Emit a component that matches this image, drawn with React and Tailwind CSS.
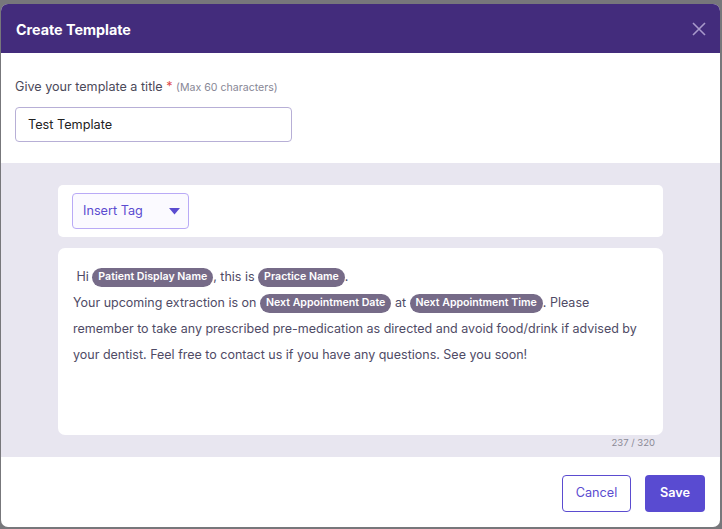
import React from "react";

function Tag({ children }) {
  return (
    <span className="inline-flex h-[19px] items-center rounded-full bg-[#766b88] px-[6px] align-middle text-[10.6px] font-semibold leading-none text-white">
      {children}
    </span>
  );
}

export default function App() {
  return (
    <div className="h-[529px] w-[722px] overflow-hidden bg-[#77777b] pl-[1px] pt-[4px] font-['Inter',sans-serif]">
      <div className="flex h-[523px] w-[719px] flex-col overflow-hidden rounded-[7px] bg-white">
        <div className="flex h-[49px] shrink-0 items-center justify-between bg-[#432c7c] pl-[15px] pr-[14px]">
          <h2 className="pt-[2px] text-[14.3px] font-bold text-white">Create Template</h2>
          <svg width="14" height="14" viewBox="0 0 14 14" className="text-[#a899cb]">
            <path d="M1 1 L13 13 M13 1 L1 13" stroke="currentColor" strokeWidth="1.6" />
          </svg>
        </div>

        <div className="h-[110px] shrink-0 px-[14px] pt-[26px]">
          <label className="block text-[12.6px] leading-[16px] text-[#4b4a5a]">
            Give your template a title <span className="text-[#e04b4b]">*</span>{" "}
            <span className="text-[10.6px] text-[#888796]">(Max 60 characters)</span>
          </label>
          <div className="mt-[11px] flex h-[35px] w-[277px] items-center rounded-[4px] border border-[#b7afd6] px-[12px] text-[12.7px] text-[#222]">
            Test Template
          </div>
        </div>

        <div className="flex h-[294px] shrink-0 flex-col bg-[#e8e6f0] px-[57px] pt-[22px]">
          <div className="flex h-[52px] items-center rounded-[5px] bg-white px-[14px]">
            <div className="flex h-[36px] w-[117px] items-center justify-between rounded-[4px] border border-[#b9aaf6] bg-[#fbfaff] pl-[10px] pr-[8px] text-[12.7px] text-[#5b4cd0]">
              <span>Insert Tag</span>
              <svg width="11" height="7" viewBox="0 0 11 7">
                <path d="M0 0 H11 L5.5 6.5 Z" fill="#5b4cd0" />
              </svg>
            </div>
          </div>
          <div className="mt-[11px] h-[187px] rounded-[7px] bg-white px-[15px] pt-[16px] text-[12.5px] leading-[26px] text-[#4f4b66]">
            <p>
              &nbsp;Hi <Tag>Patient Display Name</Tag>, this is <Tag>Practice Name</Tag>.
              <br />
              Your upcoming extraction is on <Tag>Next Appointment Date</Tag> at{" "}
              <Tag>Next Appointment Time</Tag>. Please remember to take any prescribed pre-medication as directed and
              avoid food/drink if advised by your dentist. Feel free to contact us if you have any questions. See you
              soon!
            </p>
          </div>
          <div className="mt-[1px] pr-[8px] text-right text-[9.5px] leading-[14px] text-[#8b8a96]">237 / 320</div>
        </div>

        <div className="flex flex-1 items-center justify-end gap-[14px] pr-[15px] pt-[2px]">
          <button className="h-[37px] w-[69px] rounded-[4px] border border-[#5b4cd0] bg-white text-[12.7px] text-[#5b4cd0]">
            Cancel
          </button>
          <button className="h-[37px] w-[60px] rounded-[4px] bg-[#594bd1] text-[12.7px] font-semibold text-white">
            Save
          </button>
        </div>
      </div>
    </div>
  );
}
